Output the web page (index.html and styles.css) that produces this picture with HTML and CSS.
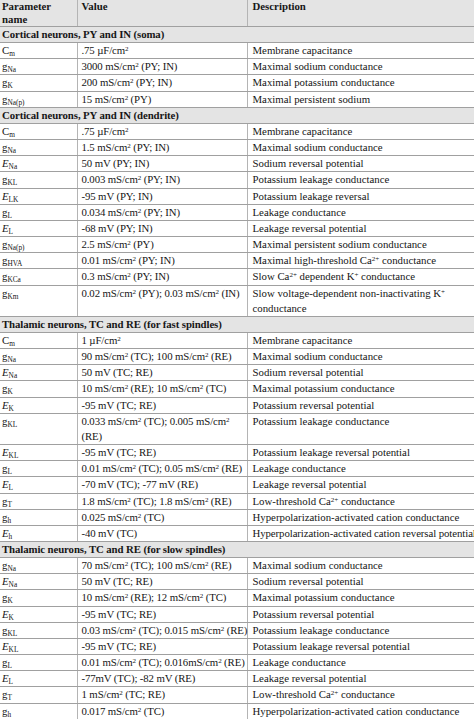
FILE: index.html
```html
<!DOCTYPE html>
<html>
<head>
<meta charset="utf-8">
<link rel="stylesheet" href="styles.css">
</head>
<body>
<table class="params">
<colgroup><col class="c1"><col class="c2"><col class="c3"></colgroup>
<thead>
<tr><th>Parameter<br>name</th><th>Value</th><th>Description</th></tr>
</thead>
<tbody>
<tr class="sec"><td colspan="3">Cortical neurons, PY and IN (soma)</td></tr>
<tr><td>C<sub>m</sub></td><td>.75 µF/cm<sup>2</sup></td><td>Membrane capacitance</td></tr>
<tr><td>g<sub>Na</sub></td><td>3000 mS/cm<sup>2</sup> (PY; IN)</td><td>Maximal sodium conductance</td></tr>
<tr><td>g<sub>K</sub></td><td>200 mS/cm<sup>2</sup> (PY; IN)</td><td>Maximal potassium conductance</td></tr>
<tr><td>g<sub>Na(p)</sub></td><td>15 mS/cm<sup>2</sup> (PY)</td><td>Maximal persistent sodium</td></tr>

<tr class="sec"><td colspan="3">Cortical neurons, PY and IN (dendrite)</td></tr>
<tr><td>C<sub>m</sub></td><td>.75 µF/cm<sup>2</sup></td><td>Membrane capacitance</td></tr>
<tr><td>g<sub>Na</sub></td><td>1.5 mS/cm<sup>2</sup> (PY; IN)</td><td>Maximal sodium conductance</td></tr>
<tr><td><i>E</i><sub>Na</sub></td><td>50 mV (PY; IN)</td><td>Sodium reversal potential</td></tr>
<tr><td>g<sub>KL</sub></td><td>0.003 mS/cm<sup>2</sup> (PY; IN)</td><td>Potassium leakage conductance</td></tr>
<tr><td><i>E</i><sub>LK</sub></td><td>-95 mV (PY; IN)</td><td>Potassium leakage reversal</td></tr>
<tr><td>g<sub>L</sub></td><td>0.034 mS/cm<sup>2</sup> (PY; IN)</td><td>Leakage conductance</td></tr>
<tr><td><i>E</i><sub>L</sub></td><td>-68 mV (PY; IN)</td><td>Leakage reversal potential</td></tr>
<tr><td>g<sub>Na(p)</sub></td><td>2.5 mS/cm<sup>2</sup> (PY)</td><td>Maximal persistent sodium conductance</td></tr>
<tr><td>g<sub>HVA</sub></td><td>0.01 mS/cm<sup>2</sup> (PY; IN)</td><td>Maximal high-threshold Ca<sup>2+</sup> conductance</td></tr>
<tr><td>g<sub>KCa</sub></td><td>0.3 mS/cm<sup>2</sup> (PY; IN)</td><td>Slow Ca<sup>2+</sup> dependent K<sup>+</sup> conductance</td></tr>
<tr><td>g<sub>Km</sub></td><td>0.02 mS/cm<sup>2</sup> (PY); 0.03 mS/cm<sup>2</sup> (IN)</td><td>Slow voltage-dependent non-inactivating K<sup>+</sup><br>conductance</td></tr>

<tr class="sec"><td colspan="3">Thalamic neurons, TC and RE (for fast spindles)</td></tr>
<tr><td>C<sub>m</sub></td><td>1 µF/cm<sup>2</sup></td><td>Membrane capacitance</td></tr>
<tr><td>g<sub>Na</sub></td><td>90 mS/cm<sup>2</sup> (TC); 100 mS/cm<sup>2</sup> (RE)</td><td>Maximal sodium conductance</td></tr>
<tr><td><i>E</i><sub>Na</sub></td><td>50 mV (TC; RE)</td><td>Sodium reversal potential</td></tr>
<tr><td>g<sub>K</sub></td><td>10 mS/cm<sup>2</sup> (RE); 10 mS/cm<sup>2</sup> (TC)</td><td>Maximal potassium conductance</td></tr>
<tr><td><i>E</i><sub>K</sub></td><td>-95 mV (TC; RE)</td><td>Potassium reversal potential</td></tr>
<tr><td>g<sub>KL</sub></td><td>0.033 mS/cm<sup>2</sup> (TC); 0.005 mS/cm<sup>2</sup><br>(RE)</td><td>Potassium leakage conductance</td></tr>
<tr><td><i>E</i><sub>KL</sub></td><td>-95 mV (TC; RE)</td><td>Potassium leakage reversal potential</td></tr>
<tr><td>g<sub>L</sub></td><td>0.01 mS/cm<sup>2</sup> (TC); 0.05 mS/cm<sup>2</sup> (RE)</td><td>Leakage conductance</td></tr>
<tr><td><i>E</i><sub>L</sub></td><td>-70 mV (TC); -77 mV (RE)</td><td>Leakage reversal potential</td></tr>
<tr><td>g<sub>T</sub></td><td>1.8 mS/cm<sup>2</sup> (TC); 1.8 mS/cm<sup>2</sup> (RE)</td><td>Low-threshold Ca<sup>2+</sup> conductance</td></tr>
<tr><td>g<sub>h</sub></td><td>0.025 mS/cm<sup>2</sup> (TC)</td><td>Hyperpolarization-activated cation conductance</td></tr>
<tr><td><i>E</i><sub>h</sub></td><td>-40 mV (TC)</td><td class="tight">Hyperpolarization-activated cation reversal potential</td></tr>

<tr class="sec"><td colspan="3">Thalamic neurons, TC and RE (for slow spindles)</td></tr>
<tr><td>g<sub>Na</sub></td><td>70 mS/cm<sup>2</sup> (TC); 100 mS/cm<sup>2</sup> (RE)</td><td>Maximal sodium conductance</td></tr>
<tr><td><i>E</i><sub>Na</sub></td><td>50 mV (TC; RE)</td><td>Sodium reversal potential</td></tr>
<tr><td>g<sub>K</sub></td><td>10 mS/cm<sup>2</sup> (RE); 12 mS/cm<sup>2</sup> (TC)</td><td>Maximal potassium conductance</td></tr>
<tr><td><i>E</i><sub>K</sub></td><td>-95 mV (TC; RE)</td><td>Potassium reversal potential</td></tr>
<tr><td>g<sub>KL</sub></td><td>0.03 mS/cm<sup>2</sup> (TC); 0.015 mS/cm<sup>2</sup> (RE)</td><td>Potassium leakage conductance</td></tr>
<tr><td><i>E</i><sub>KL</sub></td><td>-95 mV (TC; RE)</td><td>Potassium leakage reversal potential</td></tr>
<tr><td>g<sub>L</sub></td><td>0.01 mS/cm<sup>2</sup> (TC); 0.016mS/cm<sup>2</sup> (RE)</td><td>Leakage conductance</td></tr>
<tr><td><i>E</i><sub>L</sub></td><td>-77mV (TC); -82 mV (RE)</td><td>Leakage reversal potential</td></tr>
<tr><td>g<sub>T</sub></td><td>1 mS/cm<sup>2</sup> (TC; RE)</td><td>Low-threshold Ca<sup>2+</sup> conductance</td></tr>
<tr><td>g<sub>h</sub></td><td>0.017 mS/cm<sup>2</sup> (TC)</td><td>Hyperpolarization-activated cation conductance</td></tr>
</tbody>
</table>
</body>
</html>
```
FILE: styles.css
```css
html, body {
  margin: 0;
  padding: 0;
  background: #ffffff;
  overflow: hidden;
}
body {
  font-family: "Liberation Serif", "Times New Roman", serif;
  color: #161616;
}
.params {
  border-collapse: collapse;
  table-layout: fixed;
  width: 500px;
  margin-left: -2px;
  font-size: 10.8px;
  line-height: 15.15px;
}
.c1 { width: 79px; }
.c2 { width: 170px; }
.c3 { width: 251px; }
.params th {
  background: #e4e4e4;
  font-weight: bold;
  text-align: left;
  vertical-align: top;
  line-height: 13px;
  height: 23px;
  padding: 0 4px;
  border-left: 1px solid #b4b4b4;
  border-bottom: 1px solid #a0a0a0;
  box-sizing: border-box;
}
.params th:first-child { border-left: none; }
.params th:nth-child(3) { padding-left: 5px; }
.params td {
  padding: 0 4px;
  white-space: nowrap;
  vertical-align: top;
  border-left: 1px solid #b4b4b4;
  border-bottom: 1px solid #a0a0a0;
}
.params td:first-child { border-left: none; }
.params td:nth-child(2) { letter-spacing: -0.12px; }
.params td:nth-child(3) { padding-left: 5px; }
.params td.tight { letter-spacing: -0.08px; }
.params .sec td {
  background: #e4e4e4;
  font-weight: bold;
  border-left: none;
  letter-spacing: -0.1px;
}
sub {
  font-size: 0.68em;
  vertical-align: -0.3em;
  line-height: 0;
}
sup {
  font-size: 0.65em;
  vertical-align: 0.5em;
  line-height: 0;
}
```
